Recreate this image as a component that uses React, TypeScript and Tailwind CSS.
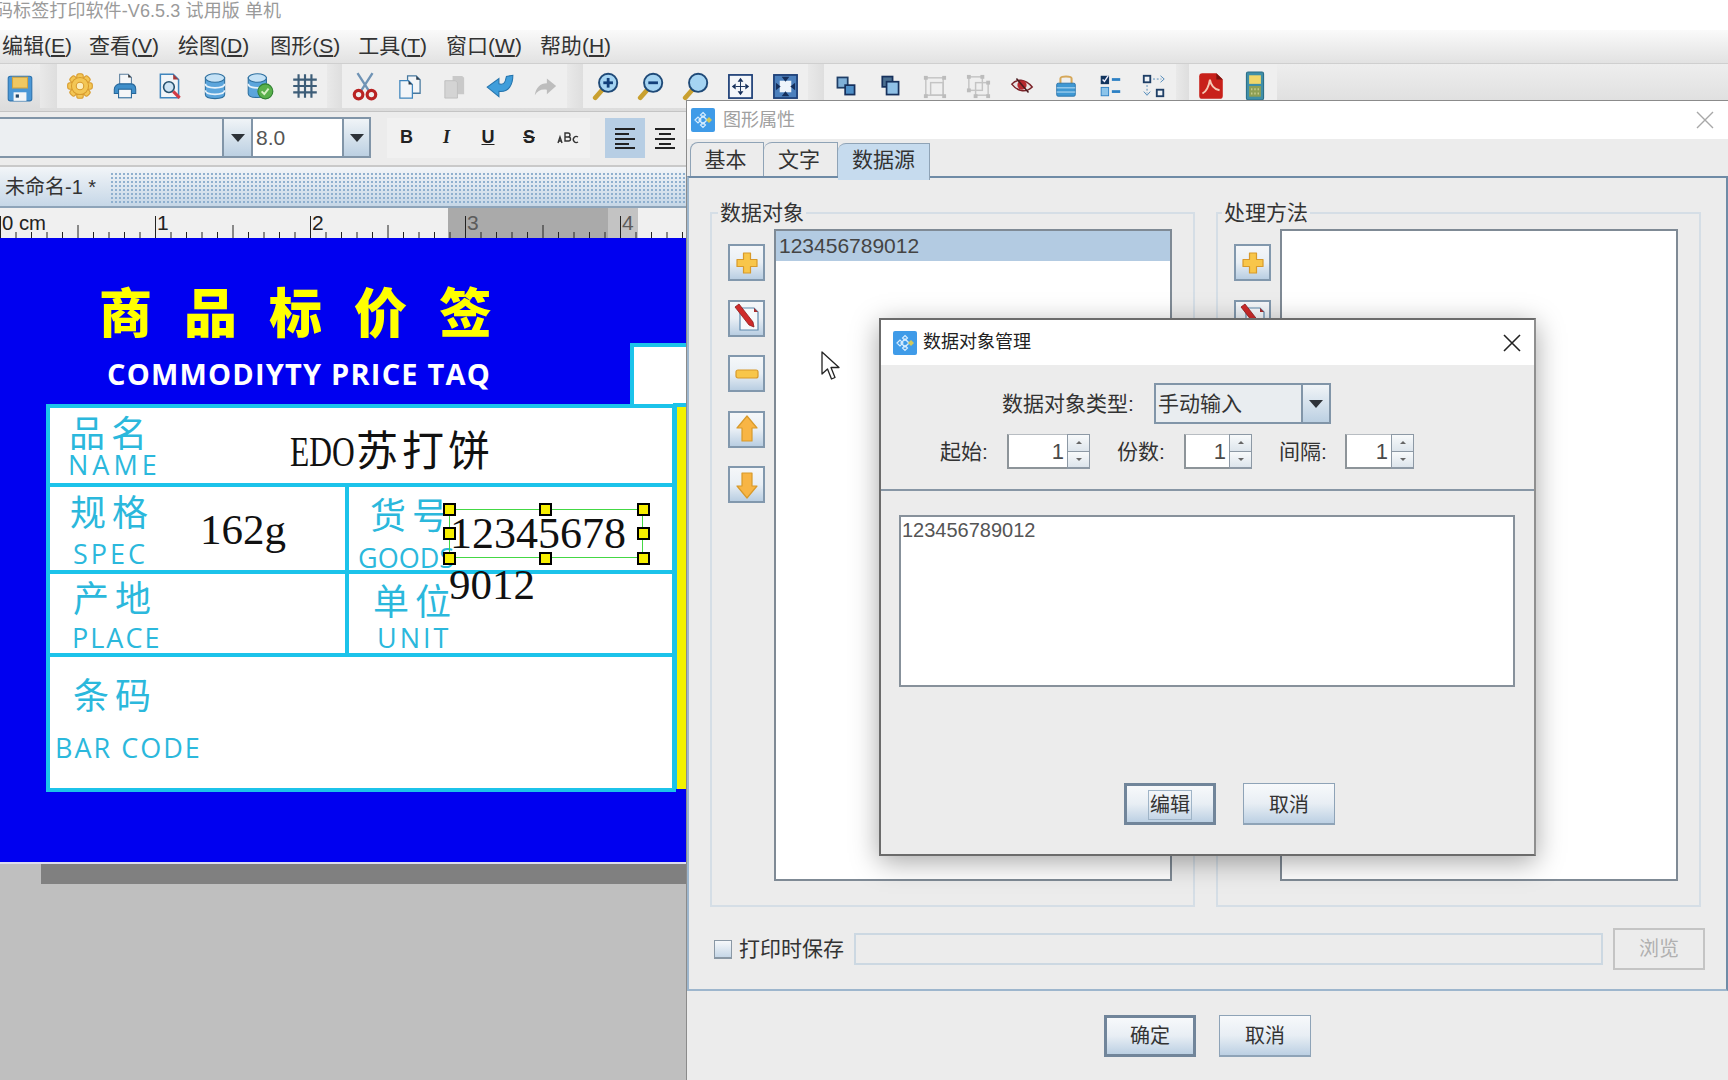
import React from "react";

const Svg = ({ children, s = 30 }: { children: React.ReactNode; s?: number }) => (
  <svg width={s} height={s} viewBox="0 0 28 28" fill="none">{children}</svg>
);

const Save = () => (<Svg><rect x="3" y="3" width="22" height="23" rx="2" fill="#4a97d6" stroke="#2b72ad" /><rect x="7" y="4" width="14" height="10" fill="#efc862" stroke="#d1a441" /><rect x="8" y="18" width="12" height="8" fill="#f4f6f8" /><rect x="10" y="20" width="3" height="3" fill="#23476a" /></Svg>);
const Gear = () => (<Svg>{[0, 45, 90, 135, 180, 225, 270, 315].map((a) => <rect key={a} x="11" y="2.5" width="6" height="7" rx="2" fill="#f3c655" stroke="#d89b2d" transform={`rotate(${a} 14 14)`} />)}<circle cx="14" cy="14" r="8" fill="#f3c655" stroke="#d89b2d" /><circle cx="14" cy="14" r="3.5" fill="#fbeec0" stroke="#d89b2d" /></Svg>);
const Printer = () => (<Svg><path d="M9 3h8l3 3v7H9z" fill="#f4f6f8" stroke="#5c7f9e" /><path d="M4 21v-4c0-3 3-5 5-5h10c3 0 5 2 5 5v4z" fill="#3f8fca" stroke="#27679a" /><rect x="8" y="17" width="12" height="8" fill="#f4f6f8" stroke="#27679a" /><path d="M17 3l3 3h-3z" fill="#333" /></Svg>);
const Preview = () => (<Svg><path d="M5 3h12l5 5v17H5z" fill="#f2f5f8" stroke="#3f85bd" strokeWidth="1.4" /><path d="M17 3l5 5h-5z" fill="#a63a3a" /><circle cx="13" cy="15" r="5" fill="#cfe4f4" stroke="#26516f" strokeWidth="1.5" /><path d="M17 19l6 6" stroke="#d23b46" strokeWidth="3" /></Svg>);
const Db = () => (<Svg><path d="M5 6v16c0 5 18 5 18 0V6z" fill="#5ba5dc" stroke="#2d6f9f" /><ellipse cx="14" cy="6.5" rx="9" ry="4" fill="#c5e2f6" stroke="#2d6f9f" /><path d="M5 12c0 5 18 5 18 0M5 18c0 5 18 5 18 0" stroke="#e7f2fa" strokeWidth="1.6" /></Svg>);
const DbCheck = () => (<Svg><path d="M3 6v15c0 5 17 5 17 0V6z" fill="#5ba5dc" stroke="#2d6f9f" /><ellipse cx="11.5" cy="6.5" rx="8.5" ry="4" fill="#c5e2f6" stroke="#2d6f9f" /><path d="M3 12c0 5 17 5 17 0" stroke="#e7f2fa" strokeWidth="1.6" /><circle cx="19" cy="19" r="7" fill="#59b04b" stroke="#2f8030" /><path d="M15.5 19l2.5 2.5 4-5" stroke="#d6f0c4" strokeWidth="1.8" /></Svg>);
const Grid = () => (<Svg><path d="M8 3v22M14 3v22M20 3v22M3 8h22M3 14h22M3 20h22" stroke="#3d5d78" strokeWidth="2" /></Svg>);
const Cut = () => (<Svg><path d="M7 2l11 17M21 2L10 19" stroke="#6f93b5" strokeWidth="2.2" /><circle cx="8" cy="22" r="4" fill="none" stroke="#b92323" strokeWidth="3" /><circle cx="20" cy="22" r="4" fill="none" stroke="#b92323" strokeWidth="3" /></Svg>);
const Copy = () => (<Svg s={27}><path d="M12 3h9l4 4v14H12z" fill="#f2f5f8" stroke="#46789f" strokeWidth="1.3" /><path d="M4 8h9l4 4v14H4z" fill="#f2f5f8" stroke="#3f85bd" strokeWidth="1.3" /><path d="M13 8l4 4h-4zM21 3l4 4h-4z" fill="#2c3a48" /></Svg>);
const Paste = () => (<Svg s={27}><path d="M12 3h10l2 2v17H12z" fill="#c9c9c9" /><path d="M4 8h11l2 2v16H4z" fill="#d4d4d4" stroke="#c0c0c0" /></Svg>);
const Undo = () => (<Svg><path d="M2 15l11-8v5c3 1 5 0 6-3l1-4 6-1c0 9-4 16-13 15v5z" fill="#3f9edb" stroke="#2574ad" /></Svg>);
const Redo = () => (<Svg s={26}><path d="M26 14l-10-8v5C9 11 4 16 3 24c3-5 7-7 13-6v5z" fill="#bdbdbd" /></Svg>);
const Zoom = ({ k }: { k: "+" | "-" | "" }) => (<Svg><path d="M4 25l7-8" stroke="#c9a02f" strokeWidth="4.5" strokeLinecap="round" /><circle cx="16" cy="11" r="8.5" fill="#a5d4f2" stroke="#1f4a78" strokeWidth="1.8" />{k && <path d="M11.5 11h9" stroke="#123f7a" strokeWidth="2.6" />}{k === "+" && <path d="M16 6.5v9" stroke="#123f7a" strokeWidth="2.6" />}</Svg>);
const FitA = () => (<Svg s={27}><rect x="2" y="2" width="24" height="24" fill="#f3f6fa" stroke="#1d3f77" strokeWidth="1.8" /><path d="M14 5l-3 4h6zM14 23l-3-4h6zM5 14l4-3v6zM23 14l-4-3v6z" fill="#16305c" /><path d="M14 9v10M9 14h10" stroke="#16305c" /></Svg>);
const FitB = () => (<Svg s={27}><rect x="2" y="2" width="24" height="24" fill="#4c80bd" stroke="#1d3f77" strokeWidth="1.8" /><path d="M8 8h12v12H8z" fill="#eef4fb" /><path d="M14 9l-4-5h8zM14 19l-4 5h8zM9 14l-5-4v8zM19 14l5-4v8z" fill="#16305c" /></Svg>);
const Front = () => (<Svg s={24}><rect x="4" y="4" width="12" height="12" fill="#7fb0d8" stroke="#1f3e66" strokeWidth="2" /><rect x="13" y="13" width="11" height="11" fill="#4e8fc8" stroke="#16305c" strokeWidth="2" /></Svg>);
const Back = () => (<Svg s={24}><rect x="5" y="3" width="12" height="12" fill="#4b6f90" stroke="#16305c" strokeWidth="2" /><rect x="10" y="9" width="14" height="15" fill="#8fc0e6" stroke="#16305c" strokeWidth="2" /></Svg>);
const GroupI = () => (<Svg s={27}><rect x="5" y="5" width="18" height="18" stroke="#c4c4c4" strokeWidth="1.5" /><rect x="10" y="10" width="13" height="13" stroke="#c4c4c4" strokeWidth="1.5" />{[[3, 3], [22, 3], [3, 22], [22, 22]].map(([x, y]) => <rect key={x * 10 + y} x={x} y={y} width="4" height="4" fill="#bcbcbc" />)}</Svg>);
const UngroupI = () => (<Svg s={27}><rect x="4" y="4" width="14" height="14" stroke="#c4c4c4" strokeWidth="1.5" /><rect x="11" y="10" width="13" height="13" stroke="#c4c4c4" strokeWidth="1.5" />{[[2, 2], [16, 2], [2, 16], [22, 8], [22, 22], [9, 22]].map(([x, y]) => <rect key={x * 10 + y} x={x} y={y} width="4" height="4" fill="#bcbcbc" />)}</Svg>);
const Eye = () => (<Svg s={26}><path d="M3 12c5-6 14-6 22 3-6 6-15 6-22-3z" fill="#e9e3e3" stroke="#7a2228" strokeWidth="1.6" /><circle cx="14" cy="13" r="5" fill="#b7282e" /><path d="M8 6l13 15" stroke="#4a1b1f" strokeWidth="1.6" /></Svg>);
const Lock = () => (<Svg s={26}><path d="M8 12V6c0-3 12-3 12 0v6" stroke="#d6a85a" strokeWidth="2.2" /><rect x="4" y="11" width="20" height="14" rx="1.5" fill="#3f98d3" stroke="#2b74ab" /><path d="M4 16h20M4 20.5h20" stroke="#c6e4f6" /></Svg>);
const ListI = () => (<Svg s={26}><rect x="4" y="3" width="9" height="9" fill="#12345e" /><path d="M6 7l2 2 4-6" stroke="#eef" strokeWidth="1.5" /><path d="M16 7h9" stroke="#2d80c4" strokeWidth="3" /><rect x="4.5" y="15.5" width="8" height="9" fill="#8cc4ea" stroke="#2d80c4" /><path d="M16 20h9" stroke="#2d80c4" strokeWidth="3" /></Svg>);
const Arrange = () => (<Svg s={26}><rect x="3" y="3" width="7" height="7" fill="#eef2f6" stroke="#1f3f66" strokeWidth="2" /><path d="M13 6.5h9" stroke="#4c86b8" strokeDasharray="2 2" /><path d="M21 3l4 3.5-4 3.5" stroke="#4c86b8" /><path d="M6.5 13v9" stroke="#4c86b8" strokeDasharray="2 2" /><path d="M3 20l3.5 4 3.5-4" stroke="#4c86b8" /><rect x="17" y="18" width="7" height="7" fill="#eef2f6" stroke="#1f3f66" strokeWidth="2" /></Svg>);
const Pdf = () => (<Svg><path d="M3 5a3 3 0 0 1 3-3h13l6 6v15a3 3 0 0 1-3 3H6a3 3 0 0 1-3-3z" fill="#c8201a" /><path d="M19 2l6 6h-6z" fill="#7d120e" /><path d="M6 21c4-2 6-7 7-13 1 6 4 9 9 10" stroke="#f6c9b5" strokeWidth="1.8" /></Svg>);
const Calc = () => (<Svg><rect x="6" y="1" width="16" height="26" rx="1.5" fill="#3f8fa8" stroke="#2b6d86" /><rect x="8.5" y="4" width="11" height="8" fill="#f0d76a" /><rect x="8.5" y="14" width="11" height="10" fill="#8e9f54" /><path d="M11 16v6M14 16v6M17 16v6" stroke="#d7d9a0" strokeDasharray="2 2" /></Svg>);

const TB = ({ children, w = "w-[45px]" }: { children: React.ReactNode; w?: string }) => (
  <div className={`${w} h-full flex items-center justify-center`}>{children}</div>
);
const Sep = ({ w }: { w: string }) => <div className={`${w} h-[44px] bg-gradient-to-r from-[#e9e9e9] to-[#dedede]`} />;

const Caret = () => <div className="w-0 h-0 border-x-[7px] border-x-transparent border-t-[8px] border-t-[#2d3238]" />;

const AppLogo = ({ s = "w-[24px] h-[24px]" }: { s?: string }) => (
  <div className={`${s} rounded-[2px] bg-[#3f9be8] flex items-center justify-center shrink-0`}>
    <svg width="20" height="20" viewBox="0 0 20 20" fill="none">
      <path d="M6 10l4-4 4 4-4 4z" stroke="#d5ecff" strokeWidth="1.4" />
      <path d="M2 10l3-3 3 3-3 3zM10 2.5l2.5 2.5L10 7.5 7.5 5zM10 12.5l2.5 2.5-2.5 2.5L7.5 15z" stroke="#d5ecff" strokeWidth="1.2" />
      <path d="M13 10l3-3 3 3-3 3z" fill="#d2c85a" />
    </svg>
  </div>
);

const Btn = ({ children, primary, className = "" }: { children: React.ReactNode; primary?: boolean; className?: string }) => (
  <div className={`w-[92px] h-[42px] flex items-center justify-center text-[20px] text-[#333] bg-gradient-to-b from-[#f7f9fb] via-[#e8eef4] to-[#bcd0e3] ${primary ? "border-[3px] border-[#71859a]" : "border border-[#8ea3b7] border-b-2"} ${className}`}>{children}</div>
);

const SideBtn = ({ children }: { children: React.ReactNode }) => (
  <div className="w-[37px] h-[37px] flex items-center justify-center border-2 border-[#8298ad] bg-gradient-to-b from-[#f5f7f9] via-[#e9eff5] to-[#b9cee2]">{children}</div>
);

const Plus = () => (<svg width="24" height="24" viewBox="0 0 24 24"><path d="M8.5 2h7v6.5H22v7h-6.5V22h-7v-6.5H2v-7h6.5z" fill="#f8c64a" stroke="#d89a2b" strokeWidth="1.2" strokeLinejoin="round" /></svg>);
const Minus = () => (<svg width="24" height="24" viewBox="0 0 24 24"><rect x="1" y="8" width="22" height="8" rx="2" fill="#f8c64a" stroke="#d89a2b" strokeWidth="1.2" /></svg>);
const Up = () => (<svg width="24" height="28" viewBox="0 0 24 28"><path d="M12 1l10 12h-5v13H7V13H2z" fill="#f8b545" stroke="#d89a2b" strokeWidth="1.2" strokeLinejoin="round" /></svg>);
const Down = () => (<svg width="24" height="28" viewBox="0 0 24 28"><path d="M12 27L2 15h5V2h10v13h5z" fill="#f8b545" stroke="#d89a2b" strokeWidth="1.2" strokeLinejoin="round" /></svg>);
const Edit = () => (<svg width="30" height="30" viewBox="0 0 30 30"><path d="M8 5h14l4 4v18H8z" fill="#f6f8fb" stroke="#5c87ab" strokeWidth="1.2" /><path d="M22 5l4 4h-4z" fill="#a82d2d" /><path d="M3 4l4-3 14 18 1 5-5-2z" fill="#cf2a2a" stroke="#8e1a1a" strokeWidth="0.8" /></svg>);

const Spinner = ({ w, input }: { w: string; input: string }) => (
  <div className={`${w} h-[35px] flex`}>
    <div className={`${input} h-full bg-white border-l-2 border-b-2 border-t border-[#8d9499] border-t-[#b8bdc2] flex items-center justify-end pr-[3px] text-[22px] text-[#4a4a4a] font-['Liberation_Sans',sans-serif]`}>1</div>
    <div className="flex-1 flex flex-col border border-[#8d99a5] border-b-2">
      <div className="flex-1 flex items-center justify-center bg-gradient-to-b from-[#f8fafb] to-[#dde5ec] border-b border-[#8d99a5]"><div className="w-0 h-0 border-x-[3px] border-x-transparent border-b-[3px] border-b-[#666]" /></div>
      <div className="flex-1 flex items-center justify-center bg-gradient-to-b from-[#f8fafb] to-[#dde5ec]"><div className="w-0 h-0 border-x-[3px] border-x-transparent border-t-[3px] border-t-[#666]" /></div>
    </div>
  </div>
);

const Ruler = () => {
  const ticks = Array.from({ length: 46 }, (_, i) => i);
  return (
    <svg width="687" height="30" className="block">
      <rect x="448" width="160" height="30" fill="#aaaaaa" />
      <rect x="608" width="30" height="30" fill="#c3c3c3" />
      {ticks.map((i) => {
        const x = i * 15.5;
        const h = i % 10 === 0 ? 22 : i % 5 === 0 ? 13 : 6;
        return <line key={i} x1={x + 0.5} x2={x + 0.5} y1={30 - h} y2={30} stroke="#222" strokeWidth="1" />;
      })}
      <text x="2" y="22" fontSize="21" fill="#222" fontFamily="Liberation Sans" textLength="44" lengthAdjust="spacingAndGlyphs">0 cm</text>
      <text x="157" y="22" fontSize="21" fill="#222" fontFamily="Liberation Sans">1</text>
      <text x="312" y="22" fontSize="21" fill="#222" fontFamily="Liberation Sans">2</text>
      <text x="467" y="22" fontSize="21" fill="#5c5c5c" fontFamily="Liberation Sans">3</text>
      <text x="622" y="22" fontSize="21" fill="#5c5c5c" fontFamily="Liberation Sans">4</text>
    </svg>
  );
};

const Handle = ({ c }: { c: string }) => <div className={`absolute w-[13px] h-[13px] bg-[#f7ee00] border-2 border-black ${c}`} />;

const Menu = ({ a, k, tail }: { a: string; k: string; tail?: string }) => (
  <span className={tail}>{a}(<u>{k}</u>)</span>
);

export default function App() {
  const cyan = "text-[#2bb8dc] font-['Noto_Sans_CJK_SC',sans-serif] leading-none absolute text-[36px] tracking-[6px] whitespace-nowrap";
  const latin = "text-[#2bb8dc] font-['Open_Sans',sans-serif] leading-none absolute text-[27px] whitespace-nowrap";
  const black = "text-[#111] font-['Liberation_Serif','Noto_Sans_CJK_SC',serif] leading-none absolute whitespace-nowrap";
  return (
    <div className="relative w-[1728px] h-[1080px] overflow-hidden flex flex-col bg-[#bfbfbf] font-['Liberation_Sans','Noto_Sans_CJK_SC',sans-serif] text-[#333]">
      <div className="h-[30px] pb-[7px] bg-white flex items-center text-[18px] tracking-[0.1px] text-[#9a9a9a] -indent-[5px] shrink-0 whitespace-nowrap">码标签打印软件-V6.5.3 试用版 单机</div>

      <div className="h-[34px] pb-[2px] shrink-0 bg-gradient-to-b from-[#fafafa] to-[#e2e2e2] border-b border-[#cfcfcf] flex items-center pl-[2px] text-[21px] whitespace-nowrap">
        <Menu a="编辑" k="E" /><Menu a="查看" k="V" tail="ml-[17px]" /><Menu a="绘图" k="D" tail="ml-[19px]" /><Menu a="图形" k="S" tail="ml-[21px]" /><Menu a="工具" k="T" tail="ml-[18px]" /><Menu a="窗口" k="W" tail="ml-[19px]" /><Menu a="帮助" k="H" tail="ml-[18px]" />
      </div>

      <div className="h-[48px] shrink-0 flex bg-gradient-to-b from-[#eeeeee] to-[#dcdcdc] border-b border-[#c4c4c4]">
        <TB w="w-[40px]"><Save /></TB>
        <Sep w="w-[17px]" />
        <div className="flex bg-[#efefef] h-[44px]">
          <TB><Gear /></TB><TB><Printer /></TB><TB><Preview /></TB><TB><Db /></TB><TB><DbCheck /></TB><TB><Grid /></TB>
        </div>
        <Sep w="w-[15px]" />
        <div className="flex bg-[#efefef] h-[44px]">
          <TB><Cut /></TB><TB><Copy /></TB><TB><Paste /></TB><TB><Undo /></TB><TB><Redo /></TB>
        </div>
        <Sep w="w-[16px]" />
        <div className="flex bg-[#efefef] h-[44px]">
          <TB><Zoom k="+" /></TB><TB><Zoom k="-" /></TB><TB><Zoom k="" /></TB><TB><FitA /></TB><TB><FitB /></TB>
        </div>
        <Sep w="w-[16px]" />
        <div className="flex bg-[#efefef] h-[44px]">
          <TB w="w-[44px]"><Front /></TB><TB w="w-[44px]"><Back /></TB><TB w="w-[44px]"><GroupI /></TB><TB w="w-[44px]"><UngroupI /></TB><TB w="w-[44px]"><Eye /></TB><TB w="w-[44px]"><Lock /></TB><TB w="w-[44px]"><ListI /></TB><TB w="w-[44px]"><Arrange /></TB>
        </div>
        <Sep w="w-[13px]" />
        <div className="flex bg-[#efefef] h-[44px]">
          <TB w="w-[44px]"><Pdf /></TB><TB w="w-[44px]"><Calc /></TB>
        </div>
      </div>

      <div className="h-[55px] pb-[2px] shrink-0 flex items-center bg-[#ececec] border-b-2 border-[#c9c9c9]">
        <div className="w-[222px] h-[41px] border-2 border-[#8195a8] border-l-0 border-r-0 bg-[#eceff2]" />
        <div className="w-[31px] h-[41px] border-2 border-[#8195a8] bg-gradient-to-b from-[#f0f4f7] to-[#bcd0e2] flex items-center justify-center"><Caret /></div>
        <div className="w-[89px] h-[41px] border-y-2 border-[#8195a8] bg-white flex items-center pl-[3px] text-[21px] text-[#555]">8.0</div>
        <div className="w-[29px] h-[41px] border-2 border-[#8195a8] bg-gradient-to-b from-[#f0f4f7] to-[#bcd0e2] flex items-center justify-center"><Caret /></div>
        <div className="ml-[16px] w-[203px] h-[40px] bg-[#f1f1f1] flex items-center text-[18px] text-[#222] font-bold">
          <span className="w-[39px] text-center">B</span>
          <span className="w-[41px] text-center italic font-['Liberation_Serif',serif]">I</span>
          <span className="w-[42px] text-center underline">U</span>
          <span className="w-[40px] text-center line-through">S</span>
          <svg className="ml-[6px]" width="26" height="20" viewBox="0 0 26 20" fill="none" stroke="#333" strokeWidth="1.4"><path d="M3 15l2-6 2 6M4 13h2M10 5h3a1.5 1.5 0 0 1 0 4h-3zM10 9h3.5a2 2 0 0 1 0 4H10zM23 9a3 3 0 1 0 0 5" /></svg>
        </div>
        <div className="ml-[15px] w-[40px] h-[40px] bg-[#b7cee4] flex items-center justify-center">
          <svg width="22" height="24" viewBox="0 0 22 24" stroke="#222" strokeWidth="2"><path d="M1 3h20M1 8h14M1 13h20M1 18h14M1 22h20" /></svg>
        </div>
        <div className="w-[40px] h-[40px] flex items-center justify-center">
          <svg width="22" height="24" viewBox="0 0 22 24" stroke="#222" strokeWidth="2"><path d="M1 3h20M5 8h12M1 13h20M5 18h12M1 22h20" /></svg>
        </div>
      </div>

      <div className="h-[41px] shrink-0 flex bg-gradient-to-b from-[#f2f5f8] to-[#c6d7e7] border-b-2 border-[#8ea4b9]">
        <div className="w-[110px] pl-[5px] flex items-center text-[20px] text-[#333] whitespace-nowrap">未命名-1 *</div>
        <div className="w-[577px] mt-[5px] mb-[2px] bg-[radial-gradient(#8fb0cf_1px,transparent_1.2px)] bg-[length:4px_4px]" />
      </div>

      <div className="h-[30px] shrink-0 bg-[#f0f0f0]"><Ruler /></div>

      <div className="relative h-[624px] w-[687px] shrink-0 bg-[#0000f0] overflow-hidden">
        <div className="absolute left-[99px] top-[46px] flex gap-[32px] text-[#ffff00] text-[53px] leading-none font-black font-['Noto_Sans_CJK_SC',sans-serif]">
          <span>商</span><span>品</span><span>标</span><span>价</span><span>签</span>
        </div>
        <div className="absolute left-[107px] top-[121px] text-white text-[29px] leading-none font-bold font-['Open_Sans',sans-serif] tracking-[1.2px] whitespace-nowrap">COMMODIYTY PRICE TAQ</div>

        <div className="absolute left-[630px] top-[105px] w-[60px] h-[66px] bg-white border-4 border-[#1cc3ea]" />
        <div className="absolute left-[673px] top-[165px] w-[14px] h-[386px] bg-[#f2f200] border-l-4 border-t-4 border-[#1cc3ea]" />

        <div className="absolute left-[46px] top-[166px] w-[630px] h-[388px] bg-white border-[4px] border-[#1cc3ea] flex flex-col">
          <div className="h-[79px] border-b-4 border-[#1cc3ea]" />
          <div className="h-[87px] flex border-b-4 border-[#1cc3ea]"><div className="w-[299px] border-r-4 border-[#1cc3ea]" /></div>
          <div className="h-[83px] flex border-b-4 border-[#1cc3ea]"><div className="w-[299px] border-r-4 border-[#1cc3ea]" /></div>
          <div className="flex-1" />
        </div>

        <div className={`${cyan} left-[69px] top-[175px]`}>品名</div>
        <div className={`${latin} left-[68px] top-[213px] tracking-[4px]`}>NAME</div>
        <div className={`${black} left-[290px] top-[193px] text-[42px] flex`}>
          <span className="inline-block w-[66px] scale-x-[0.75] origin-left">EDO</span>
          <span className="tracking-[4px]">苏打饼</span>
        </div>

        <div className={`${cyan} left-[70px] top-[254px]`}>规格</div>
        <div className={`${latin} left-[73px] top-[302px] tracking-[3px]`}>SPEC</div>
        <div className={`${black} left-[200px] top-[270px] text-[43px]`}>162g</div>
        <div className={`${cyan} left-[370px] top-[257px]`}>货号</div>
        <div className={`${latin} left-[358px] top-[306px]`}>GOODS</div>

        <div className={`${cyan} left-[73px] top-[340px]`}>产地</div>
        <div className={`${latin} left-[72px] top-[386px] tracking-[2px]`}>PLACE</div>
        <div className={`${cyan} left-[373px] top-[343px]`}>单位</div>
        <div className={`${latin} left-[377px] top-[386px] tracking-[3px]`}>UNIT</div>
        <div className={`${cyan} left-[73px] top-[437px]`}>条码</div>
        <div className={`${latin} left-[55px] top-[496px] tracking-[2px]`}>BAR CODE</div>

        <div className="absolute left-[449px] top-[271px] w-[194px] h-[49px] border border-[#44d844]" />
        <div className={`${black} left-[450px] top-[274px] text-[44px]`}>12345678</div>
        <div className={`${black} left-[449px] top-[325px] text-[43px]`}>9012</div>
        <Handle c="left-[443px] top-[265px]" />
        <Handle c="left-[539px] top-[265px]" />
        <Handle c="left-[637px] top-[265px]" />
        <Handle c="left-[443px] top-[289px]" />
        <Handle c="left-[637px] top-[289px]" />
        <Handle c="left-[443px] top-[314px]" />
        <Handle c="left-[539px] top-[314px]" />
        <Handle c="left-[637px] top-[314px]" />
      </div>
      <div className="h-[2px] w-[687px] shrink-0 bg-[#dcdcf0]" />
      <div className="ml-[41px] h-[20px] w-[646px] shrink-0 bg-[#808080]" />

      {/* 图形属性 dialog */}
      <div className="absolute left-[686px] top-[100px] w-[1042px] h-[980px] bg-[#ececec] border-t border-l border-[#8b8b8b] flex flex-col">
        <div className="h-[38px] shrink-0 bg-white flex items-center pl-[4px] pr-[14px]">
          <AppLogo />
          <span className="ml-[8px] text-[18px] text-[#a0a0a0]">图形属性</span>
          <svg className="ml-auto" width="18" height="18" viewBox="0 0 18 18" stroke="#a8a8a8" strokeWidth="1.4"><path d="M1 1l16 16M17 1L1 17" /></svg>
        </div>
        <div className="h-[37px] shrink-0 flex items-end pl-[3px] text-[21px]">
          <div className="w-[74px] h-[34px] pr-[3px] border border-b-0 border-[#8fa3b6] rounded-tl-[8px] flex items-center justify-center">基本</div>
          <div className="w-[74px] h-[34px] pr-[3px] border border-b-0 border-l-0 border-[#8fa3b6] rounded-tl-[8px] flex items-center justify-center">文字</div>
          <div className="w-[92px] h-[37px] -mb-[4px] pb-[4px] z-10 border border-b-0 border-l-0 border-[#8fa3b6] rounded-tl-[8px] bg-[#c6dbee] flex items-center justify-center">数据源</div>
        </div>
        <div className="h-[815px] shrink-0 border-2 border-[#9db6cd] border-t-[#6f8ba6] border-r-[#6f8ba6] pt-[34px] flex flex-col">
          <div className="flex pl-[21px] gap-[21px]">
            <div className="relative w-[485px] h-[695px] border-2 border-[#d5dee6] flex pt-[15px] pl-[16px]">
              <span className="absolute left-[6px] -top-[14px] bg-[#ececec] px-[2px] text-[21px] leading-[26px]">数据对象</span>
              <div className="w-[37px] mt-[15px] flex flex-col gap-[18.5px]">
                <SideBtn><Plus /></SideBtn><SideBtn><Edit /></SideBtn><SideBtn><Minus /></SideBtn><SideBtn><Up /></SideBtn><SideBtn><Down /></SideBtn>
              </div>
              <div className="ml-[9px] w-[398px] h-[652px] bg-white border-2 border-[#7f8a95]">
                <div className="h-[30px] bg-[#b3cbe2] pl-[3px] flex items-center text-[21px] text-[#444]">123456789012</div>
              </div>
            </div>
            <div className="relative w-[485px] h-[695px] border-2 border-[#d5dee6] flex pt-[15px] pl-[16px]">
              <span className="absolute left-[4px] -top-[14px] bg-[#ececec] px-[2px] text-[21px] leading-[26px]">处理方法</span>
              <div className="w-[37px] mt-[15px] flex flex-col gap-[18.5px]">
                <SideBtn><Plus /></SideBtn><SideBtn><Edit /></SideBtn>
              </div>
              <div className="ml-[9px] w-[398px] h-[652px] bg-white border-2 border-[#7f8a95]" />
            </div>
          </div>
          <div className="mt-[21px] ml-[25px] h-[42px] flex items-center">
            <div className="w-[18px] h-[19px] border border-[#8a98a5] border-b-2 bg-gradient-to-b from-[#f6f8fa] to-[#c6d7e7]" />
            <span className="ml-[7px] text-[21px] w-[115px] whitespace-nowrap">打印时保存</span>
            <div className="w-[749px] h-[32px] border-2 border-[#ccd8e2] bg-[#ececec]" />
            <div className="ml-[10px] w-[92px] h-[42px] border-2 border-[#c4c4c4] flex items-center justify-center text-[20px] text-[#b0b0b0]">浏览</div>
          </div>
        </div>
        <div className="flex justify-center gap-[23px] pt-[24px]">
          <Btn primary>确定</Btn>
          <Btn>取消</Btn>
        </div>
      </div>

      {/* 数据对象管理 dialog */}
      <div className="absolute left-[879px] top-[318px] w-[657px] h-[538px] bg-[#ececec] border-2 border-[#6b6b6b] border-r-[#8f8f8f] shadow-[0_6px_26px_rgba(0,0,0,0.35)] flex flex-col">
        <div className="h-[45px] shrink-0 bg-white flex items-center pl-[12px] pr-[13px]">
          <AppLogo />
          <span className="ml-[6px] text-[18px] text-[#222]">数据对象管理</span>
          <svg className="ml-auto" width="18" height="18" viewBox="0 0 18 18" stroke="#222" strokeWidth="1.6"><path d="M1 1l16 16M17 1L1 17" /></svg>
        </div>
        <div className="h-[126px] shrink-0 border-b-2 border-[#8796a5] pt-[18px]">
          <div className="flex items-center h-[41px] pl-[121px]">
            <span className="w-[152px] text-[21px] whitespace-nowrap">数据对象类型:</span>
            <div className="w-[148px] h-[41px] border-2 border-r border-[#8195a8] bg-[#e9edf0] flex items-center pl-[2px] text-[21px]">手动输入</div>
            <div className="w-[29px] h-[41px] border-2 border-l border-[#8195a8] bg-gradient-to-b from-[#f0f4f7] to-[#bcd0e2] flex items-center justify-center"><Caret /></div>
          </div>
          <div className="flex items-center h-[35px] mt-[10px] pl-[59px] text-[21px]">
            <span className="w-[67px] whitespace-nowrap">起始:</span>
            <Spinner w="w-[83px]" input="w-[60px]" />
            <span className="ml-[27px] w-[67px] whitespace-nowrap">份数:</span>
            <Spinner w="w-[68px]" input="w-[45px]" />
            <span className="ml-[27px] w-[66px] whitespace-nowrap">间隔:</span>
            <Spinner w="w-[69px]" input="w-[46px]" />
          </div>
        </div>
        <div className="ml-[18px] mt-[24px] w-[616px] h-[172px] bg-white border-2 border-[#87919b] pl-[1px] text-[20px] text-[#555] leading-[26px]">123456789012</div>
        <div className="ml-[243px] mt-[96px] flex gap-[27px]">
          <Btn primary className="pt-[2px]"><span className="border border-[#9fb4c7] px-[1px] leading-[28px]">编辑</span></Btn>
          <Btn className="pt-[2px]">取消</Btn>
        </div>
      </div>

      {/* mouse cursor */}
      <svg className="absolute left-[821px] top-[351px]" width="20" height="30" viewBox="0 0 20 30"><path d="M1 1v22l5.5-5 4 10 3.5-1.5-4-10h8z" fill="#fff" stroke="#222" strokeWidth="1.3" strokeLinejoin="round" /></svg>
    </div>
  );
}
